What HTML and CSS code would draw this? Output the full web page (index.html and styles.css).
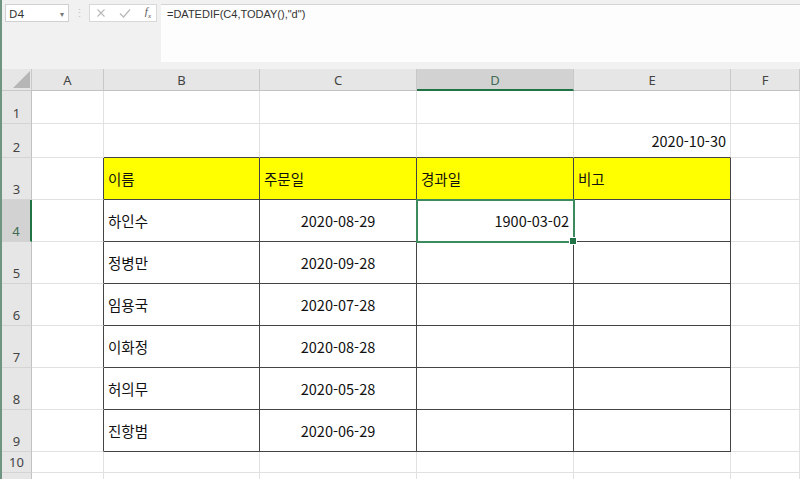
FILE: index.html
```html
<!DOCTYPE html>
<html lang="ko">
<head>
    <meta charset="UTF-8">
    <title>Excel - DATEDIF</title>
    <link rel="stylesheet" href="styles.css">
</head>
<body>
    <div class="app">
        <div class="formula-bar">
            <div class="name-box">
                <span>D4</span>
                <span class="caret">&#9662;</span>
            </div>
            <div class="grip">&#8942;</div>
            <div class="fx-box">
                <svg width="10" height="10" viewBox="0 0 10 10"><path d="M1.5 1.5 L8.5 8.5 M8.5 1.5 L1.5 8.5" stroke="#b8b8b8" stroke-width="1.1" fill="none"/></svg>
                <svg width="12" height="10" viewBox="0 0 12 10"><path d="M1 5.5 L4.5 9 L11 1.5" stroke="#b8b8b8" stroke-width="1.2" fill="none"/></svg>
                <span class="fx">f<sub>x</sub></span>
            </div>
            <div class="formula">=DATEDIF(C4,TODAY(),"d")</div>
        </div>

        <div class="sheet">
            <!-- header row -->
            <div class="corner"><span class="tri"></span></div>
            <div class="hd">A</div>
            <div class="hd">B</div>
            <div class="hd">C</div>
            <div class="hd sel">D</div>
            <div class="hd">E</div>
            <div class="hd">F</div>

            <!-- 1 -->
            <div class="rh">1</div>
            <div class="c"></div><div class="c"></div><div class="c"></div><div class="c"></div><div class="c"></div><div class="c"></div>

            <!-- 2 -->
            <div class="rh">2</div>
            <div class="c"></div>
            <div class="c bb"></div>
            <div class="c bb"></div>
            <div class="c bb"></div>
            <div class="c bb right">2020-10-30</div>
            <div class="c"></div>

            <!-- 3 -->
            <div class="rh">3</div>
            <div class="c br"></div>
            <div class="c br bb yel">이름</div>
            <div class="c br bb yel">주문일</div>
            <div class="c br bb yel">경과일</div>
            <div class="c br bb yel">비고</div>
            <div class="c"></div>

            <!-- 4 -->
            <div class="rh sel">4</div>
            <div class="c br"></div>
            <div class="c br bb">하인수</div>
            <div class="c br bb mid">2020-08-29</div>
            <div class="c br bb right active">1900-03-02</div>
            <div class="c br bb"></div>
            <div class="c"></div>

            <!-- 5 -->
            <div class="rh">5</div>
            <div class="c br"></div>
            <div class="c br bb">정병만</div>
            <div class="c br bb mid">2020-09-28</div>
            <div class="c br bb"></div>
            <div class="c br bb"></div>
            <div class="c"></div>

            <!-- 6 -->
            <div class="rh">6</div>
            <div class="c br"></div>
            <div class="c br bb">임용국</div>
            <div class="c br bb mid">2020-07-28</div>
            <div class="c br bb"></div>
            <div class="c br bb"></div>
            <div class="c"></div>

            <!-- 7 -->
            <div class="rh">7</div>
            <div class="c br"></div>
            <div class="c br bb">이화정</div>
            <div class="c br bb mid">2020-08-28</div>
            <div class="c br bb"></div>
            <div class="c br bb"></div>
            <div class="c"></div>

            <!-- 8 -->
            <div class="rh">8</div>
            <div class="c br"></div>
            <div class="c br bb">허의무</div>
            <div class="c br bb mid">2020-05-28</div>
            <div class="c br bb"></div>
            <div class="c br bb"></div>
            <div class="c"></div>

            <!-- 9 -->
            <div class="rh">9</div>
            <div class="c br"></div>
            <div class="c br bb">진항범</div>
            <div class="c br bb mid">2020-06-29</div>
            <div class="c br bb"></div>
            <div class="c br bb"></div>
            <div class="c"></div>

            <!-- 10 -->
            <div class="rh">10</div>
            <div class="c"></div><div class="c"></div><div class="c"></div><div class="c"></div><div class="c"></div><div class="c"></div>

            <!-- 11 (cut off by the window) -->
            <div class="rh"></div>
            <div class="c"></div><div class="c"></div><div class="c"></div><div class="c"></div><div class="c"></div><div class="c"></div>
        </div>
    </div>
</body>
</html>
```

FILE: styles.css
```css
* {
    margin: 0;
    padding: 0;
    box-sizing: border-box;
}

body {
    width: 800px;
    height: 479px;
    overflow: hidden;
    background: #f1f1f1;
    font-family: 'Noto Sans', 'Noto Sans CJK KR', sans-serif;
}

.app {
    border-left: 2px solid #6f9481;
    height: 479px;
    overflow: hidden;
}

/* formula bar */
.formula-bar {
    display: flex;
    align-items: flex-start;
    height: 69px;
    padding: 4px 0 0 3px;
}

.name-box {
    width: 64px;
    height: 18px;
    background: #fff;
    border: 1px solid #d0d0d0;
    display: flex;
    align-items: center;
    justify-content: space-between;
    padding: 0 4px 0 3px;
    font-size: 11.5px;
    color: #333;
}

.name-box .caret {
    font-size: 8px;
    color: #777;
}

.grip {
    width: 20px;
    height: 18px;
    text-align: center;
    font-size: 11px;
    line-height: 18px;
    color: #c2c2c2;
}

.fx-box {
    width: 68px;
    height: 18px;
    background: #fff;
    border: 1px solid #d8d8d8;
    display: flex;
    align-items: center;
    justify-content: space-between;
    padding: 0 5px 0 6px;
}

.fx {
    font-family: 'Liberation Serif', serif;
    font-style: italic;
    font-size: 11px;
    color: #555;
}

.fx sub {
    font-size: 7px;
}

.formula {
    flex: 1;
    height: 58px;
    margin-left: 4px;
    background: #fdfdfd;
    border-top: 1px solid #d4d4d4;
    padding: 3px 0 0 6px;
    font-family: 'Liberation Sans', sans-serif;
    font-size: 11px;
    color: #333;
}

/* grid */
.sheet {
    display: grid;
    grid-template-columns: 30px 72px 156px 157px 157px 157px 69px;
    grid-template-rows: 22px 33px 34px 42px repeat(6, 42px) 21px 21px;
    background: #fff;
}

.corner {
    background: #e6e6e6;
    border-right: 1px solid #c8c8c8;
    border-bottom: 1px solid #c8c8c8;
    position: relative;
}

.corner .tri {
    position: absolute;
    right: 1px;
    bottom: 2px;
    width: 0;
    height: 0;
    border-left: 17px solid transparent;
    border-bottom: 17px solid #b6b6b6;
}

.hd {
    background: #e6e6e6;
    border-right: 1px solid #c8c8c8;
    border-bottom: 1px solid #c2c2c2;
    display: flex;
    align-items: center;
    justify-content: center;
    font-size: 13px;
    color: #444;
    padding-top: 1px;
}

.hd.sel {
    background: #d2d2d2;
    border-bottom: 2px solid #217346;
    color: #3e6b52;
}

.rh {
    background: #e6e6e6;
    border-right: 1px solid #c2c2c2;
    border-bottom: 1px solid #d4d4d4;
    display: flex;
    align-items: flex-end;
    justify-content: center;
    font-size: 13px;
    color: #444;
    padding-bottom: 1px;
}

.rh.sel {
    background: #d2d2d2;
    border-right: 2px solid #217346;
    color: #3e6b52;
}

.c {
    border-right: 1px solid #e1e1e1;
    border-bottom: 1px solid #e1e1e1;
    display: flex;
    align-items: center;
    padding: 0 4px;
    font-family: 'Noto Sans CJK KR', sans-serif;
    font-size: 14.5px;
    color: #111;
    white-space: nowrap;
}

.c.br {
    border-right-color: #444;
}

.c.bb {
    border-bottom-color: #444;
}

.c.yel {
    background: #ffff00;
}

.c.right {
    justify-content: flex-end;
}

.c.mid {
    justify-content: center;
}

.c.active {
    position: relative;
}

.c.active::after {
    content: "";
    position: absolute;
    left: -1px;
    top: -1px;
    right: -2px;
    bottom: -2px;
    border: 2px solid #3d8a5e;
}

.c.active::before {
    content: "";
    position: absolute;
    right: -4px;
    bottom: -4px;
    width: 6px;
    height: 6px;
    background: #217346;
    border: 1px solid #fff;
    z-index: 1;
}
```
